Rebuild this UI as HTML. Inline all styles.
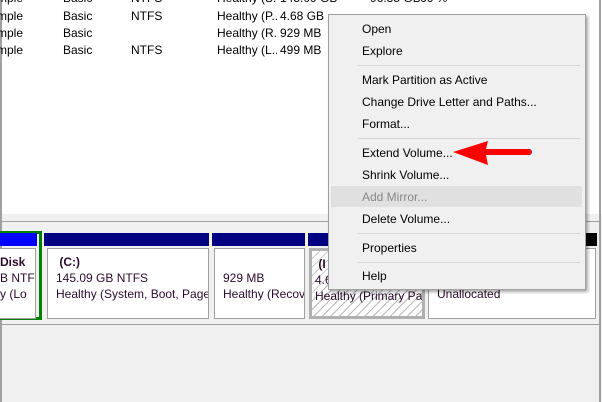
<!DOCTYPE html>
<html><head><meta charset="utf-8"><style>
*{margin:0;padding:0;box-sizing:border-box}
body{width:602px;height:402px;overflow:hidden;background:#f0f0f0;font-family:"Liberation Sans",Arial,sans-serif;font-size:12px;color:#000;position:relative}
.a{position:absolute;white-space:nowrap}
.top{left:0;top:0;width:602px;height:214px;background:#fff}
.t{color:#000;font-size:12px}
.h{width:60px;overflow:hidden}
.hdr{position:absolute;top:233px;height:13px}
.box{position:absolute;top:248px;height:71px;background:#fff;border:1px solid #a0a0a0;padding:5px 0 0 8px;line-height:16px;font-size:12px;color:#2b0a2b;overflow:hidden;white-space:nowrap}
.menu{left:328px;top:14px;width:258px;height:276px;background:#f0f0f0;border:1px solid #a0a0a0;box-shadow:2px 2px 3px rgba(0,0,0,.35)}
.mi{position:absolute;left:33px;font-size:12px;color:#000;white-space:nowrap}
.sep{position:absolute;left:29px;width:222px;height:1px;background:#d4d4d4}
</style></head><body>
<div class="a top"></div>
<div class="a" style="left:0;top:0;width:2px;height:402px;background:#a0a0a0"></div>
<div class="a" style="left:599px;top:0;width:2px;height:402px;background:#a0a0a0"></div>
<div class="a t" style="left:-3px;top:-9px">mple</div><div class="a t" style="left:63px;top:-9px">Basic</div><div class="a t" style="left:131px;top:-9px">NTFS</div><div class="a t h" style="left:217px;top:-9px">Healthy (S...</div><div class="a t" style="left:280px;top:-9px">145.09 GB</div><div class="a t" style="left:370px;top:-9px">96.35 GB</div><div class="a t" style="left:420px;top:-9px">66 %</div>
<div class="a t" style="left:-3px;top:9px">mple</div><div class="a t" style="left:63px;top:9px">Basic</div><div class="a t" style="left:131px;top:9px">NTFS</div><div class="a t h" style="left:217px;top:9px">Healthy (P...</div><div class="a t" style="left:280px;top:9px">4.68 GB</div>
<div class="a t" style="left:-3px;top:26px">mple</div><div class="a t" style="left:63px;top:26px">Basic</div><div class="a t h" style="left:217px;top:26px">Healthy (R...</div><div class="a t" style="left:280px;top:26px">929 MB</div>
<div class="a t" style="left:-3px;top:43px">mple</div><div class="a t" style="left:63px;top:43px">Basic</div><div class="a t" style="left:131px;top:43px">NTFS</div><div class="a t h" style="left:217px;top:43px">Healthy (L...</div><div class="a t" style="left:280px;top:43px">499 MB</div>
<div class="a" style="left:0;top:221px;width:600px;height:1px;background:#a0a0a0"></div>
<div class="a" style="left:0;top:324px;width:600px;height:1px;background:#a0a0a0"></div>
<div class="a" style="left:0;top:231px;width:42px;height:89px;border:3px solid #008000;border-left:none"></div>
<div class="hdr" style="left:0;width:37px;background:#0000ff"></div>
<div class="box" style="left:0;width:36px;padding-left:0;border-left:none"><b>Disk</b><br>B NTF<br>y (Lo</div>
<div class="hdr" style="left:44px;width:165px;background:#000080"></div>
<div class="box" style="left:47px;width:162px"><b>&nbsp;(C:)</b><br>145.09 GB NTFS<br>Healthy (System, Boot, Page</div>
<div class="hdr" style="left:212px;width:93px;background:#000080"></div>
<div class="box" style="left:214px;width:91px"><br>929 MB<br>Healthy (Recov</div>
<div class="hdr" style="left:308px;width:118px;background:#000080"></div>
<div class="box" style="left:309px;width:116px;border:3px solid #b0b0b0;padding-left:3px;background:repeating-linear-gradient(135deg,#fff 0 5px,#b8b8b8 5px 6px)"><b>&nbsp;(I</b><br>4.68<br>Healthy (Primary Pa</div>
<div class="hdr" style="left:427px;width:170px;background:#000"></div>
<div class="box" style="left:428px;width:168px"><br><br>Unallocated</div>
<div class="a menu">
<div class="mi" style="top:7px">Open</div>
<div class="mi" style="top:29px">Explore</div>
<div class="sep" style="top:50px"></div>
<div class="mi" style="top:58px">Mark Partition as Active</div>
<div class="mi" style="top:80px">Change Drive Letter and Paths...</div>
<div class="mi" style="top:102px">Format...</div>
<div class="sep" style="top:123px"></div>
<div class="mi" style="top:131px">Extend Volume...</div>
<div class="mi" style="top:153px">Shrink Volume...</div>
<div class="a" style="left:2px;top:171px;width:251px;height:21px;background:#e0e0e0"></div>
<div class="mi" style="top:175px;color:#888">Add Mirror...</div>
<div class="mi" style="top:197px">Delete Volume...</div>
<div class="sep" style="top:218px"></div>
<div class="mi" style="top:226px">Properties</div>
<div class="sep" style="top:247px"></div>
<div class="mi" style="top:254px">Help</div>
</div>
<svg class="a" style="left:450px;top:138px" width="85" height="30"><path d="M3 14 L38 3 L36 11 L80 11 Q84 14 80 17 L36 17 L38 27 Z" fill="#f00"/></svg>
</body></html>
